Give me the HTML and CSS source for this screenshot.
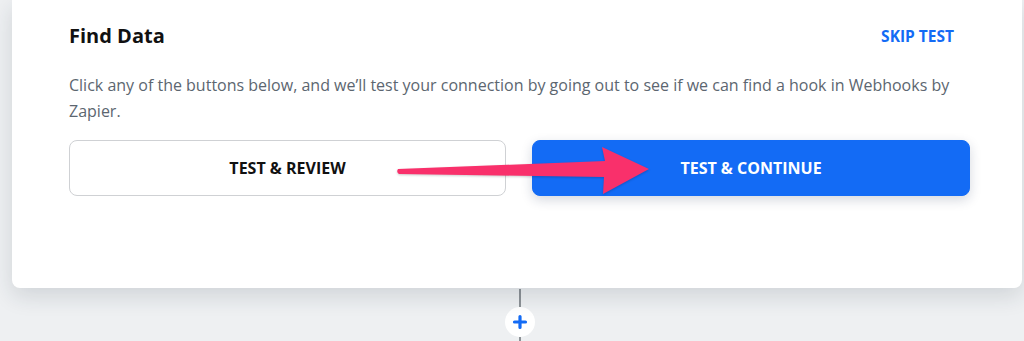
FILE: index.html
```html
<!DOCTYPE html>
<html>
<head>
<meta charset="utf-8">
<link rel="stylesheet" href="styles.css">
</head>
<body>
<div class="page">
  <section class="card">
    <div class="card-head">
      <h2 class="title">Find Data</h2>
      <a class="skip">SKIP TEST</a>
    </div>
    <p class="desc">Click any of the buttons below, and we’ll test your connection by going out to see if we can find a hook in Webhooks by Zapier.</p>
    <div class="actions">
      <button class="btn btn-outline">TEST &amp; REVIEW</button>
      <button class="btn btn-primary">TEST &amp; CONTINUE</button>
    </div>
    <svg class="arrow" width="1024" height="341" viewBox="0 0 1024 341">
      <path d="M398 169 Q396 172 399 174 L604 177 L603 194 L649 169 L602 147 L605 161 Z" fill="#f9306b"/>
    </svg>
  </section>
  <div class="connector">
    <div class="line top"></div>
    <div class="plus">
      <svg width="16" height="16" viewBox="0 0 16 16"><path d="M8 2.5v11M2.5 8h11" stroke="#136bf5" stroke-width="3.2" stroke-linecap="round"/></svg>
    </div>
    <div class="line bottom"></div>
  </div>
</div>
</body>
</html>
```
FILE: styles.css
```css
html, body {
  margin: 0;
  padding: 0;
  height: 341px;
  overflow: hidden;
}
body {
  background: #eef0f2;
  font-family: "Open Sans", "Liberation Sans", sans-serif;
}
.page {
  padding-left: 12px;
  padding-right: 2px;
}
.card {
  position: relative;
  background: #fff;
  border-radius: 0 0 8px 8px;
  box-shadow: 0 8px 22px rgba(30, 40, 60, 0.14);
  height: 288px;
  box-sizing: border-box;
  padding: 22px 52px 0 57px;
}
.card-head {
  display: flex;
  justify-content: space-between;
  align-items: center;
}
.title {
  margin: 0;
  font-size: 20px;
  font-weight: 700;
  line-height: 28px;
  color: #111;
}
.skip {
  font-size: 15.5px;
  font-weight: 700;
  color: #136bf5;
  margin-right: 16px;
  line-height: 26px;
}
.desc {
  margin: 22px 0 0 0;
  font-size: 16px;
  line-height: 26px;
  color: #5c6670;
}
.actions {
  display: grid;
  grid-template-columns: 437px 438px;
  gap: 26px;
  margin-top: 16px;
}
.btn {
  height: 56px;
  border-radius: 8px;
  font-family: "Open Sans", "Liberation Sans", sans-serif;
  font-size: 16px;
  font-weight: 700;
  cursor: pointer;
}
.btn-outline {
  background: #fff;
  border: 1px solid #cfd1d4;
  color: #111;
}
.btn-primary {
  background: #136bf5;
  border: 1px solid #136bf5;
  color: #fff;
  box-shadow: 0 4px 12px rgba(20, 40, 80, 0.18);
}
.arrow {
  position: absolute;
  left: -12px;
  top: 0;
  pointer-events: none;
  filter: drop-shadow(0 1px 1px rgba(0,0,0,0.2));
}
.connector {
  display: flex;
  flex-direction: column;
  align-items: center;
  width: 1010px;
  margin-left: 3px;
}
.line {
  width: 2px;
  background: #8c9196;
}
.line.top {
  height: 18px;
  margin-top: 1px;
}
.line.bottom {
  height: 10px;
}
.plus {
  width: 30px;
  height: 30px;
  border-radius: 50%;
  background: #fff;
  display: flex;
  align-items: center;
  justify-content: center;
}
```
